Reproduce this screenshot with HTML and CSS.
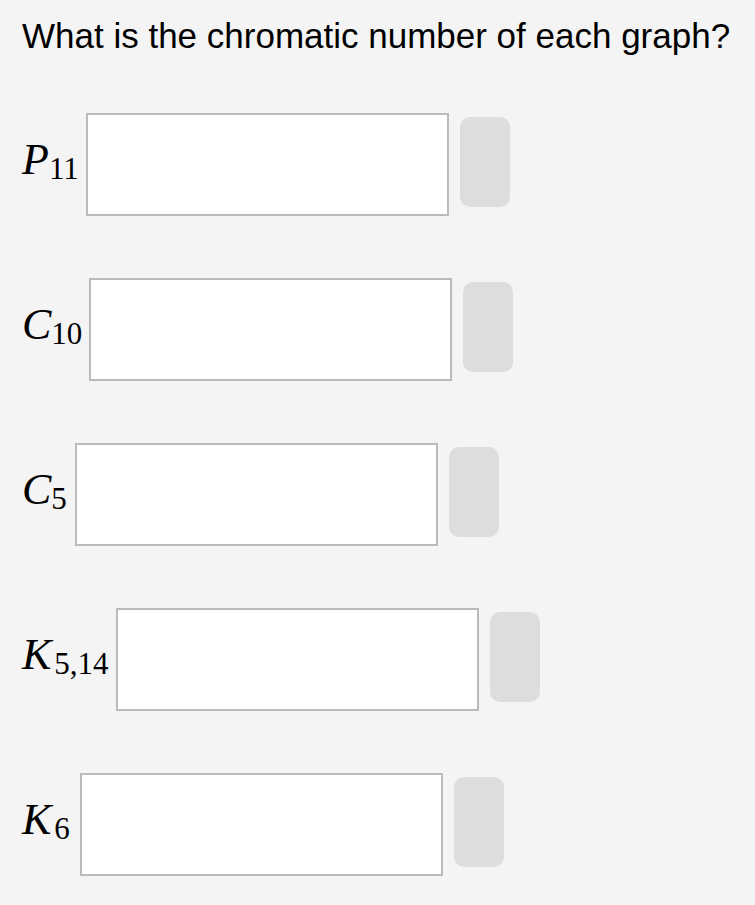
FILE: index.html
```html
<!DOCTYPE html>
<html>
<head>
<meta charset="utf-8">
<link rel="stylesheet" href="styles.css">
</head>
<body>
<h1 class="title">What is the chromatic number of each graph?</h1>
<div class="list">
  <div class="row">
    <span class="label"><i>P</i><sub>11</sub></span>
    <input class="answer" type="text">
    <button class="check" type="button"></button>
  </div>
  <div class="row">
    <span class="label"><i>C</i><sub>10</sub></span>
    <input class="answer" type="text">
    <button class="check" type="button"></button>
  </div>
  <div class="row">
    <span class="label"><i>C</i><sub class="single">5</sub></span>
    <input class="answer" type="text">
    <button class="check" type="button"></button>
  </div>
  <div class="row">
    <span class="label"><i class="wide">K</i><sub>5,14</sub></span>
    <input class="answer" type="text">
    <button class="check" type="button"></button>
  </div>
  <div class="row">
    <span class="label"><i class="wide">K</i><sub class="single wider">6</sub></span>
    <input class="answer" type="text">
    <button class="check" type="button"></button>
  </div>
</div>
</body>
</html>
```
FILE: styles.css
```css
html, body {
  margin: 0;
  padding: 0;
  background: #f4f4f4;
}
body {
  padding: 16px 22px 0 22px;
  font-family: "Liberation Sans", Arial, sans-serif;
  color: #000;
}
.title {
  margin: 0;
  font-size: 35px;
  font-weight: normal;
  line-height: normal;
}
.list {
  display: flex;
  flex-direction: column;
  gap: 62px;
  margin-top: 57px;
}
.row {
  display: flex;
  align-items: center;
}
.label {
  font-family: "Liberation Serif", "Times New Roman", serif;
  font-size: 44px;
  line-height: 1;
  margin-right: 7px;
  margin-bottom: 8px;
  white-space: nowrap;
}
.label i {
  font-style: italic;
}
.label i.wide {
  margin-right: 3px;
}
.label sub {
  font-size: 31px;
  vertical-align: -5px;
  line-height: 1;
}
.label sub.single {
  margin-right: 1px;
}
.label sub.wider {
  margin-right: 3px;
}
.answer {
  box-sizing: border-box;
  width: 363px;
  height: 103px;
  margin: 0;
  border: 2px solid #bbb;
  background: #fff;
  border-radius: 0;
  outline: none;
}
.check {
  width: 50px;
  height: 90px;
  margin: 0 0 5px 11px;
  padding: 0;
  border: none;
  border-radius: 10px;
  background: #ddd;
}
```
